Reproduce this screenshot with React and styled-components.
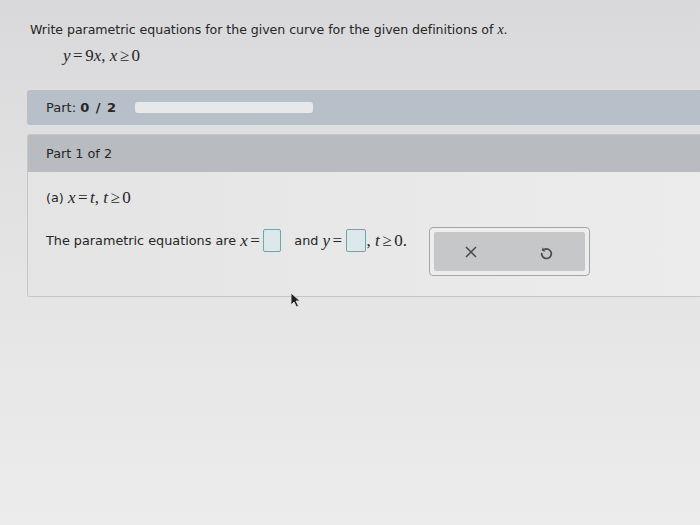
import React from "react";
import styled, { createGlobalStyle } from "styled-components";

const Global = createGlobalStyle`
  html, body {
    margin: 0;
    padding: 0;
  }
  body {
    width: 700px;
    height: 525px;
    overflow: hidden;
    background: linear-gradient(180deg, #d9d9db 0%, #e2e2e3 40%, #ececec 100%);
    font-family: "DejaVu Sans", Verdana, sans-serif;
    color: #262626;
  }
`;

const Page = styled.div`
  position: relative;
  padding: 22px 0 0 27px;
`;

const Prompt = styled.div`
  font-size: 12.6px;
  line-height: 15px;
  padding-left: 3px;
  letter-spacing: -0.05px;
`;

const Math = styled.span`
  font-family: "Liberation Serif", "Times New Roman", serif;
  font-size: ${(p) => p.size || 17}px;
  white-space: nowrap;
  i {
    font-style: italic;
  }
`;

const Op = styled.span`
  padding: 0 2.5px;
`;

const Given = styled.div`
  box-sizing: border-box;
  height: 53px;
  padding: 9px 0 0 36px;
`;

const PartBar = styled.div`
  display: flex;
  align-items: center;
  gap: 18px;
  height: 35px;
  padding-left: 19px;
  background: #b7bfc9;
  border-radius: 3px 0 0 3px;
  font-size: 13px;
  b {
    font-weight: bold;
    letter-spacing: 1px;
  }
`;

const Progress = styled.div`
  width: 178px;
  height: 11px;
  border-radius: 3px;
  background: #e6e8ea;
`;

const Section = styled.div`
  margin-top: 9px;
  border: 1px solid #c6c6c6;
  border-right: none;
  border-radius: 3px 0 0 3px;
  overflow: hidden;
`;

const SectionHead = styled.div`
  height: 37px;
  display: flex;
  align-items: center;
  padding-left: 18px;
  background: #b8bbc0;
  font-size: 12.8px;
`;

const SectionBody = styled.div`
  background: linear-gradient(90deg, #e4e4e4, #ececec);
  padding: 16px 0 20px 18px;
`;

const Line = styled.div`
  display: flex;
  align-items: ${(p) => (p.top ? "flex-start" : "center")};
  font-size: 12.8px;
  height: ${(p) => p.h || 18}px;
  line-height: 23px;
  margin-bottom: ${(p) => p.gap || 0}px;
`;

const Blank = styled.span`
  display: inline-block;
  box-sizing: border-box;
  width: ${(p) => p.w || 18}px;
  height: 23px;
  border: 1.5px solid #6aa8ad;
  border-radius: 2px;
  background: #dce8ea;
  margin: 0 ${(p) => p.right || 13}px 0 1px;
`;

const Tools = styled.div`
  margin: -2px 0 0 22px;
  padding: 4px;
  border: 1px solid #a6a6a6;
  border-radius: 4px;
  background: #ededed;
`;

const ToolInner = styled.div`
  width: 151px;
  height: 39px;
  display: flex;
  align-items: center;
  justify-content: space-around;
  background: #c6c7c9;
  border-radius: 2px;
`;

const ToolBtn = styled.button`
  border: none;
  background: none;
  padding: 0;
  display: flex;
  color: #4a4a4a;
`;

const Cursor = styled.svg`
  position: absolute;
  left: 290px;
  top: 292px;
`;

export default function App() {
  return (
    <>
      <Global />
      <Page>
        <Prompt>
          Write parametric equations for the given curve for the given definitions of{" "}
          <Math size={14}><i>x</i></Math>.
        </Prompt>
        <Given>
          <Math>
            <i>y</i><Op>=</Op>9<i>x</i>, <i>x</i><Op>≥</Op>0
          </Math>
        </Given>
        <PartBar>
          <span>
            Part: <b>0 / 2</b>
          </span>
          <Progress />
        </PartBar>
        <Section>
          <SectionHead>Part 1 of 2</SectionHead>
          <SectionBody>
            <Line gap={23}>
              (a)&nbsp;
              <Math>
                <i>x</i><Op>=</Op><i>t</i>, <i>t</i><Op>≥</Op>0
              </Math>
            </Line>
            <Line top h={47}>
              The parametric equations are&nbsp;
              <Math>
                <i>x</i><Op>=</Op>
              </Math>
              <Blank />
              and&nbsp;
              <Math>
                <i>y</i><Op>=</Op>
              </Math>
              <Blank w={20} right={1} />
              <Math>
                , <i>t</i><Op>≥</Op>0.
              </Math>
              <Tools>
                <ToolInner>
                  <ToolBtn aria-label="clear">
                    <svg width="14" height="14" viewBox="0 0 14 14">
                      <path d="M2 2L12 12M12 2L2 12" stroke="#4a4a4a" strokeWidth="1.5" />
                    </svg>
                  </ToolBtn>
                  <ToolBtn aria-label="undo">
                    <svg width="15" height="16" viewBox="0 0 13 14">
                      <path
                        d="M4.4 4.86A4.2 4.2 0 1 1 2.36 7.77"
                        fill="none"
                        stroke="#4a4a4a"
                        strokeWidth="1.5"
                      />
                      <path d="M2.4 6L3.2 2.8L5.6 6.8Z" fill="#4a4a4a" />
                    </svg>
                  </ToolBtn>
                </ToolInner>
              </Tools>
            </Line>
          </SectionBody>
        </Section>
        <Cursor width="12" height="16" viewBox="0 0 12 16">
          <path d="M1 1L1 13L4 10L6.5 15L8.5 14L6 9L10 9Z" fill="#222" stroke="#eee" strokeWidth="0.8" />
        </Cursor>
      </Page>
    </>
  );
}
